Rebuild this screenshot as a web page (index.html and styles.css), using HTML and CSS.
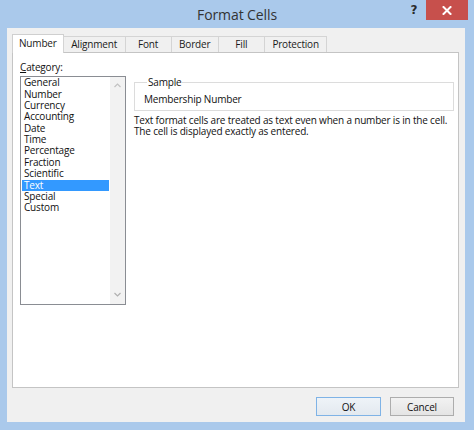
FILE: index.html
```html
<!DOCTYPE html>
<html lang="en">
<head>
<meta charset="utf-8">
<title>Format Cells</title>
<link rel="stylesheet" href="styles.css">
</head>
<body>
<div class="window">
  <div class="titlebar">
    <div class="spacer"></div>
    <div class="title">Format Cells</div>
    <div class="caption-btns">
      <span class="help">?</span>
      <span class="close" aria-label="Close">
        <svg width="10" height="9" viewBox="0 0 10 9"><path d="M1.5 1 L8.5 8 M8.5 1 L1.5 8" stroke="#fff" stroke-width="2" stroke-linecap="square" fill="none"/></svg>
      </span>
    </div>
  </div>
  <div class="client">
    <div class="tabs">
      <div class="tab active">Number</div>
      <div class="tab">Alignment</div>
      <div class="tab">Font</div>
      <div class="tab">Border</div>
      <div class="tab">Fill</div>
      <div class="tab">Protection</div>
    </div>
    <div class="panel">
      <div class="cat-label"><span class="u">C</span>ategory:</div>
      <div class="spacer"></div>
      <div class="listbox">
        <ul class="items">
          <li>General</li>
          <li>Number</li>
          <li>Currency</li>
          <li>Accounting</li>
          <li>Date</li>
          <li>Time</li>
          <li>Percentage</li>
          <li>Fraction</li>
          <li>Scientific</li>
          <li class="selected">Text</li>
          <li>Special</li>
          <li>Custom</li>
        </ul>
        <div class="scrollbar">
          <svg width="7" height="5" viewBox="0 0 7 5"><path d="M0.5 4 L3.5 1 L6.5 4" stroke="#c2c2c2" stroke-width="1.2" fill="none"/></svg>
          <svg width="7" height="5" viewBox="0 0 7 5"><path d="M0.5 1 L3.5 4 L6.5 1" stroke="#b0b0b0" stroke-width="1.2" fill="none"/></svg>
        </div>
      </div>
      <div class="details">
        <fieldset class="sample">
          <legend>Sample</legend>
          <div class="sample-value">Membership Number</div>
        </fieldset>
        <p class="desc">Text format cells are treated as text even when a number is in the cell.<br>The cell is displayed exactly as entered.</p>
      </div>
    </div>
    <div class="footer">
      <button class="btn default">OK</button>
      <button class="btn">Cancel</button>
    </div>
  </div>
</div>
</body>
</html>
```
FILE: styles.css
```css
html, body {
  margin: 0;
  padding: 0;
  background: #aac9eb;
}
body {
  font-family: "Open Sans", "Noto Sans", "DejaVu Sans", sans-serif;
  font-size: 10px;
  letter-spacing: -0.18px;
  color: #111;
}
.window {
  width: 474px;
  height: 430px;
  background: #aac9eb;
  display: flex;
  flex-direction: column;
  overflow: hidden;
}
.titlebar {
  height: 28px;
  flex: none;
  display: grid;
  grid-template-columns: 1fr auto 1fr;
}
.title {
  font-size: 14px;
  letter-spacing: -0.1px;
  line-height: 29px;
  color: #333;
}
.caption-btns {
  justify-self: end;
  display: flex;
  align-items: flex-start;
  margin-right: 6px;
}
.help {
  width: 12px;
  margin-right: 6px;
  margin-top: 3px;
  font-family: "DejaVu Sans", sans-serif;
  font-weight: bold;
  font-size: 12px;
  line-height: 14px;
  text-align: center;
  color: #2b2b2b;
}
.close {
  width: 42px;
  height: 20px;
  background: #c7504c;
  display: flex;
  align-items: center;
  justify-content: center;
}
.client {
  flex: 1;
  margin: 0 9px 8px 7px;
  background: #f0f0f0;
  padding: 6px 6px 0 5px;
  display: flex;
  flex-direction: column;
}
.tabs {
  height: 18px;
  flex: none;
  display: flex;
  align-items: flex-end;
  position: relative;
  z-index: 1;
}
.tab {
  height: 16px;
  min-width: 47px;
  box-sizing: border-box;
  padding: 0 7.5px;
  border: 1px solid #d4d4d4;
  border-bottom: none;
  margin-left: -1px;
  background: #f0f0f0;
  line-height: 15px;
  text-align: center;
  color: #1a1a1a;
}
.tab.active {
  height: 19px;
  margin-left: 0;
  margin-bottom: -1px;
  background: #fff;
  line-height: 16px;
  padding: 0 6px;
  border-color: #cfcfcf;
}
.panel {
  flex: 1;
  background: #fff;
  border: 1px solid #c4c4c4;
  padding: 7px 4px 0 7px;
  display: grid;
  grid-template-columns: 106px 1fr;
  grid-template-rows: 16px 229px;
  column-gap: 8px;
  align-content: start;
}
.cat-label {
  line-height: 14px;
  color: #111;
}
.u {
  text-decoration: underline;
}
.listbox {
  border: 1px solid #8a8d93;
  display: flex;
  min-height: 0;
}
.items {
  flex: 1;
  list-style: none;
  margin: 0;
  padding: 0.3px 1px 0 1px;
}
.items li {
  line-height: 11.36px;
  height: 11.36px;
  padding-left: 2px;
  white-space: nowrap;
}
.items li.selected {
  background: #3399ff;
  color: #fff;
}
.scrollbar {
  width: 15px;
  background: #f2f2f2;
  display: flex;
  flex-direction: column;
  justify-content: space-between;
  align-items: center;
  padding: 6px 0 7px;
  box-sizing: border-box;
}
.details {
  min-width: 0;
}
.sample {
  margin: 0;
  padding: 5px 8px 5px;
  border: 1px solid #dcdcdc;
  min-width: 0;
}
.sample legend {
  padding: 0 1px;
  margin-left: 4px;
  line-height: 12px;
}
.sample-value {
  line-height: 12px;
  padding-left: 1px;
}
.desc {
  margin: 4px 0 0;
  line-height: 11.3px;
  white-space: nowrap;
}
.footer {
  height: 34px;
  flex: none;
  display: flex;
  justify-content: flex-end;
  align-items: flex-start;
  gap: 9px;
  padding: 9px 5px 0 0;
  box-sizing: border-box;
}
.btn {
  height: 19px;
  width: 64px;
  border: 1px solid #adadad;
  background: linear-gradient(#f2f2f2, #e4e4e4);
  font: inherit;
  letter-spacing: inherit;
  color: #111;
  padding: 0;
  line-height: 16px;
}
.btn.default {
  width: 65px;
  border-color: #7fb3e6;
  background: linear-gradient(#eef3f8, #e3e9ef);
}
```
